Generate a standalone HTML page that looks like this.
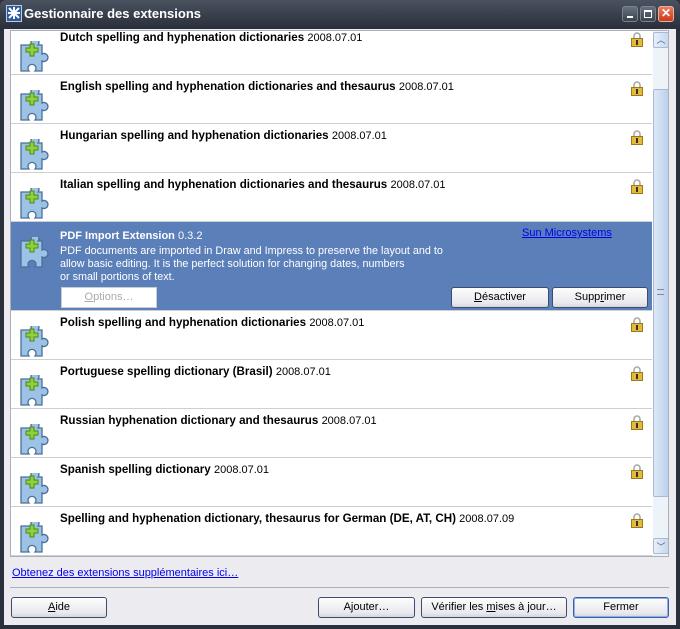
<!DOCTYPE html>
<html><head><style>
*{box-sizing:border-box;margin:0;padding:0}
body{width:680px;height:629px;overflow:hidden;background:#2b323d;font-family:"Liberation Sans",sans-serif;font-size:11px;position:relative}
.win{position:absolute;left:0;top:0;width:680px;height:629px;background:linear-gradient(#4a5260,#2a303b 28px);border-radius:6px 6px 0 0}
.title{position:absolute;left:24px;top:6px;color:#fff;font-weight:bold;font-size:13px}
.tb{position:absolute;top:6px;width:16px;height:16px;border:1px solid #7a828e;border-radius:3px;background:linear-gradient(#66707e,#3a424e)}
.body{position:absolute;left:4px;top:29px;width:672px;height:596px;background:#ecebef}
.list{position:absolute;left:10px;top:30px;width:659px;height:527px;background:#fff;border:1px solid #a9b0b9;overflow:hidden}
.row{position:absolute;left:0;width:641px;border-bottom:1px solid #cfcfd2;height:49px}
.row b{position:absolute;left:49px;top:5px;font-size:11.6px;color:#000;white-space:nowrap}
.row b span{font-weight:normal;font-size:11px}
.pz{position:absolute;left:9px;top:15px;width:30px;height:32px}
.lock{position:absolute;left:620px;top:6px;width:12px;height:15px}
.sel{background:#5b7fb9;height:89px;color:#fff}
.sel b{color:#fff;top:8px}
.btn{position:absolute;height:21px;border:1px solid #3b4c6c;border-radius:3px;background:linear-gradient(#fdfdfd,#e8e8ee 80%,#d3d6de);text-align:center;line-height:19px;font-size:11px;color:#000}
.sb{position:absolute;left:642px;top:0;width:16px;height:525px;background:#eef3fa}
</style></head><body>
<div class="win">
<svg style="position:absolute;left:6px;top:5px" width="16" height="17"><rect x="0.5" y="0.5" width="15" height="16" fill="#2a5aa0" stroke="#bcd"/><path d="M3 3l10 10M13 3L3 13M8 2v12M2 8h12" stroke="#fff" stroke-width="2"/></svg>
<div class="title">Gestionnaire des extensions</div>
<div class="tb" style="left:622px"><div style="position:absolute;left:4px;top:9px;width:6px;height:2px;background:#fff"></div></div>
<div class="tb" style="left:640px"><div style="position:absolute;left:3px;top:3px;width:8px;height:8px;border:1px solid #fff;border-top-width:2px"></div></div>
<div class="tb" style="left:658px;background:linear-gradient(#f07a5a,#c9391c);border-color:#e9b0a0;color:#fff;font-weight:bold;text-align:center;line-height:13px;font-size:12px">✕</div>
</div>
<div class="body"></div>
<div class="list">
<div id="rows"></div>
<div class="sb">
<div style="position:absolute;left:0;top:1px;width:16px;height:16px;border:1px solid #a9b9d3;border-radius:2px;background:linear-gradient(90deg,#e8effa,#c8d8ee);font-size:9px;text-align:center;color:#4d6185">︿</div>
<div style="position:absolute;left:0;top:58px;width:16px;height:408px;border:1px solid #a9b9d3;border-radius:2px;background:linear-gradient(90deg,#dde8f7,#bcd0ec);"></div>
<div style="position:absolute;left:4px;top:258px;width:7px;height:6px;border-top:1px solid #889;border-bottom:1px solid #889"></div>
<div style="position:absolute;left:0;top:507px;width:16px;height:16px;border:1px solid #a9b9d3;border-radius:2px;background:linear-gradient(90deg,#e8effa,#c8d8ee);font-size:9px;text-align:center;color:#4d6185;line-height:16px">﹀</div>
</div>
</div>
<div style="position:absolute;left:12px;top:567px;color:#0000ee;text-decoration:underline">Obtenez des extensions supplémentaires ici…</div>
<div style="position:absolute;left:10px;top:587px;width:659px;height:1px;background:#aeb2b8"></div>
<div class="btn" style="left:11px;top:597px;width:96px"><u>A</u>ide</div>
<div class="btn" style="left:318px;top:597px;width:97px">A<u>j</u>outer…</div>
<div class="btn" style="left:421px;top:597px;width:146px">Vérifier les <u>m</u>ises à jour…</div>
<div class="btn" style="left:573px;top:597px;width:96px;border-color:#3a5fa8;box-shadow:inset 0 0 0 1px #8fb0e6">Fermer</div>
<script>
var data=[["Dutch spelling and hyphenation dictionaries","2008.07.01"],["English spelling and hyphenation dictionaries and thesaurus","2008.07.01"],["Hungarian spelling and hyphenation dictionaries","2008.07.01"],["Italian spelling and hyphenation dictionaries and thesaurus","2008.07.01"],null,["Polish spelling and hyphenation dictionaries","2008.07.01"],["Portuguese spelling dictionary (Brasil)","2008.07.01"],["Russian hyphenation dictionary and thesaurus","2008.07.01"],["Spanish spelling dictionary","2008.07.01"],["Spelling and hyphenation dictionary, thesaurus for German (DE, AT, CH)","2008.07.09"]];
var pz='<svg class="pz" viewBox="0 0 30 32"><path d="M1 4h11a4 4 0 1 1 6 0h4v9a4 4 0 1 1 0 7v10h-7a4 4 0 1 0-6 0H1z" fill="#9cc2e6" stroke="#4a6f98" stroke-width="1.3"/><path d="M6 7h4v-4h4v4h4v4h-4v4h-4v-4h-4z" fill="#8fd13a" stroke="#4b8a10"/></svg>';
var lk='<svg class="lock" viewBox="0 0 12 15"><path d="M3 7V4a3 3 0 0 1 6 0v3" fill="none" stroke="#aaa" stroke-width="1.6"/><rect x="0.5" y="6.5" width="11" height="8" fill="#e5b93c" stroke="#9c7a1c"/><rect x="5" y="8" width="2" height="5" fill="#333"/></svg>';
var h='',y=-5;
data.forEach(function(d){
 if(!d){h+='<div class="row sel" style="top:'+y+'px">'+pz+'<b style="font-size:11px">PDF Import Extension <span>0.3.2</span></b><div style="position:absolute;left:511px;top:5px;text-decoration:underline;color:#00e">Sun Microsystems</div><div style="position:absolute;left:49px;top:23px;line-height:13px;width:400px;font-size:10.8px">PDF documents are imported in Draw and Impress to preserve the layout and to<br>allow basic editing. It is the perfect solution for changing dates, numbers<br>or small portions of text.</div><div class="btn" style="left:50px;top:65px;width:96px;border:1px solid #c9ccd2;background:#fff;color:#aaa;border-radius:0"><u>O</u>ptions…</div><div class="btn" style="left:440px;top:65px;width:98px"><u>D</u>ésactiver</div><div class="btn" style="left:541px;top:65px;width:96px">Supp<u>r</u>imer</div></div>';y+=89;return;}
 h+='<div class="row" style="top:'+y+'px">'+pz+lk+'<b>'+d[0]+' <span>'+d[1]+'</span></b></div>';y+=49;});
document.getElementById('rows').innerHTML=h;
</script>
</body></html>
